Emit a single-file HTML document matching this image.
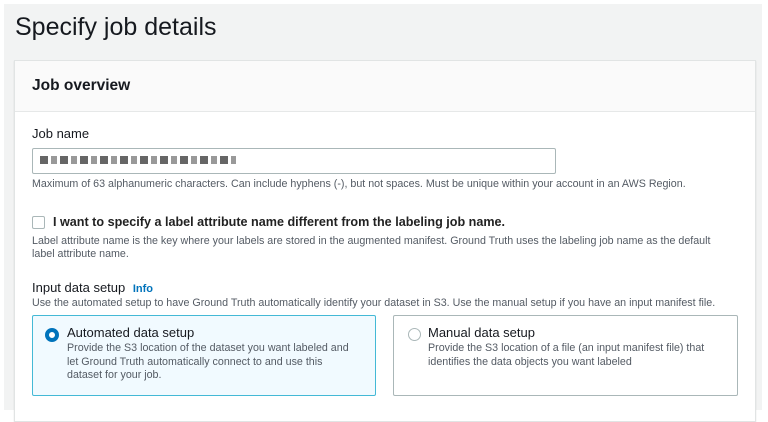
<!DOCTYPE html>
<html><head><style>
body{margin:0;width:768px;height:412px;background:#fff;font-family:"Liberation Sans",sans-serif;color:#16191f;overflow:hidden;position:relative}
.bg{position:absolute;left:4px;top:4px;width:758px;height:406px;background:#f2f3f3}
.card{position:absolute;left:14px;top:60px;width:740px;height:360px;background:#fff;border:1px solid #e1e4e4;box-shadow:0 1px 1px rgba(0,0,0,.15)}
.hdr{height:50px;background:#fafafa;border-bottom:1px solid #e6e8e8}
.a{position:absolute;white-space:nowrap}
.s{font-size:10.7px;color:#545b64}
</style></head><body>
<div class="bg"></div>
<div class="a" style="left:15px;top:13px;font-size:25px;color:#16191f">Specify job details</div>
<div class="card"><div class="hdr"></div></div>
<div class="a" style="left:32px;top:77px;font-size:15.5px;font-weight:bold">Job overview</div>
<div class="a" style="left:32px;top:126px;font-size:13px">Job name</div>
<div class="a" style="left:32px;top:148px;width:522px;height:24px;border:1px solid #aab7b8;border-radius:2px;background:#fff"></div>
<div class="a" style="left:40px;top:156px;width:196px;height:8px;background:repeating-linear-gradient(90deg,#333 0 8px,#fff 8px 11px,#777 11px 17px,#fff 17px 20px);opacity:.75"></div>
<div class="a s" style="left:32px;top:178px">Maximum of 63 alphanumeric characters. Can include hyphens (-), but not spaces. Must be unique within your account in an AWS Region.</div>
<div class="a" style="left:32px;top:216px;width:11px;height:11px;border:1px solid #aab7b8;border-radius:2px"></div>
<div class="a" style="left:53px;top:215px;font-size:12.6px;font-weight:bold;color:#222">I want to specify a label attribute name different from the labeling job name.</div>
<div class="a s" style="left:32px;top:235px;line-height:13px">Label attribute name is the key where your labels are stored in the augmented manifest. Ground Truth uses the labeling job name as the default<br>label attribute name.</div>
<div class="a" style="left:32px;top:280px;font-size:13px">Input data setup <span style="color:#0073bb;font-weight:bold;font-size:11px;margin-left:4px">Info</span></div>
<div class="a s" style="left:32px;top:297px">Use the automated setup to have Ground Truth automatically identify your dataset in S3. Use the manual setup if you have an input manifest file.</div>
<div class="a" style="left:32px;top:315px;width:342px;height:79px;background:#f1faff;border:1px solid #44b9d6;border-radius:2px"></div>
<div class="a" style="left:45px;top:328px;width:6px;height:6px;border:4px solid #0073bb;border-radius:50%;background:#fff"></div>
<div class="a" style="left:67px;top:325px;font-size:13px">Automated data setup</div>
<div class="a s" style="left:67px;top:342px;line-height:13.5px">Provide the S3 location of the dataset you want labeled and<br>let Ground Truth automatically connect to and use this<br>dataset for your job.</div>
<div class="a" style="left:393px;top:315px;width:343px;height:79px;background:#fff;border:1px solid #aab7b8;border-radius:2px"></div>
<div class="a" style="left:408px;top:328px;width:11px;height:11px;border:1px solid #aab7b8;border-radius:50%"></div>
<div class="a" style="left:428px;top:325px;font-size:13px">Manual data setup</div>
<div class="a s" style="left:428px;top:342px;line-height:13.5px">Provide the S3 location of a file (an input manifest file) that<br>identifies the data objects you want labeled</div>
</body></html>
